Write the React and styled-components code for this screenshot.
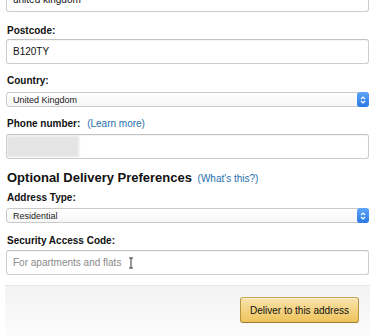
import React from "react";
import styled, { createGlobalStyle } from "styled-components";

const GlobalStyle = createGlobalStyle`
  html, body {
    margin: 0;
    padding: 0;
    background: #fff;
    font-family: "Liberation Sans", Arial, sans-serif;
    color: #111;
  }
`;

const Page = styled.div`
  width: 384px;
  height: 336px;
  overflow: hidden;
  padding: 0 15px 0 6px;
  box-sizing: border-box;
`;

const Form = styled.div`
  display: flex;
  flex-direction: column;
  margin-top: -13px;
`;

const Field = styled.div`
  display: flex;
  flex-direction: column;
  margin-top: ${(p) => p.$gap ?? 11}px;
`;

const Label = styled.div`
  font-size: 10px;
  line-height: 12px;
  font-weight: bold;
  padding-left: 1px;
  margin-bottom: ${(p) => p.$space ?? 3}px;
  white-space: nowrap;

  a {
    font-weight: normal;
    margin-left: 4px;
  }
`;

const Link = styled.a`
  color: #1f6fae;
  text-decoration: none;
  font-weight: normal;
`;

const TextBox = styled.div`
  height: 25px;
  box-sizing: border-box;
  border: 1px solid #cdcdcd;
  border-top-color: #c2c2c2;
  border-radius: 3px;
  box-shadow: inset 0 1px 0 rgba(0, 0, 0, 0.04);
  display: flex;
  align-items: center;
  padding: 0 6px;
  font-size: 10px;
  color: ${(p) => (p.$placeholder ? "#8a8a8a" : "#111")};
  overflow: hidden;
`;

const Redacted = styled.div`
  width: 72px;
  height: 21px;
  margin-left: -6px;
  background: #e4e4e4;
  filter: blur(1px);
`;

const Cursor = styled.svg`
  margin-left: 7px;
  flex: none;
`;

const Select = styled.div`
  height: 15px;
  box-sizing: border-box;
  border: 1px solid #c9c9c9;
  border-radius: 3px;
  background: linear-gradient(#ffffff, #f6f6f6);
  display: flex;
  align-items: center;
  justify-content: space-between;
  padding-left: 6px;
  font-size: 9px;
  color: #222;
`;

const Stepper = styled.div`
  width: 12px;
  height: 15px;
  margin-right: -1px;
  border-radius: 3px;
  background: linear-gradient(#5ea6f7, #2a78e4);
  display: flex;
  align-items: center;
  justify-content: center;
`;

const Heading = styled.div`
  font-size: 13px;
  line-height: 16px;
  font-weight: bold;
  padding-left: 1px;
  white-space: nowrap;

  a {
    font-size: 10px;
    margin-left: 2px;
  }
`;

const Footer = styled.div`
  margin: 10px -1px 0 -1px;
  border-top: 1px solid #e6e6e6;
  background: linear-gradient(#f3f3f3, #fbfbfb 60%, #fff);
  height: 60px;
  display: flex;
  justify-content: flex-end;
  align-items: flex-start;
  padding: 11px 11px 0 0;
`;

const Button = styled.button`
  width: 119px;
  height: 26px;
  border: 1px solid #a88734;
  border-color: #c9a44c #b8943e #9c7e31;
  border-radius: 3px;
  background: linear-gradient(#f8e3ad, #eec35a);
  box-shadow: inset 0 1px 0 rgba(255, 255, 255, 0.5);
  font-family: "Liberation Sans", Arial, sans-serif;
  font-size: 10px;
  color: #111;
  padding: 0;
  cursor: pointer;
`;

const Arrows = () => (
  <svg width="8" height="10" viewBox="0 0 8 10">
    <path d="M2 4 L4 2 L6 4" stroke="#fff" strokeWidth="1.2" fill="none" />
    <path d="M2 6 L4 8 L6 6" stroke="#fff" strokeWidth="1.2" fill="none" />
  </svg>
);

const DropDown = ({ value }) => (
  <Select>
    <span>{value}</span>
    <Stepper>
      <Arrows />
    </Stepper>
  </Select>
);

export default function App() {
  return (
    <Page>
      <GlobalStyle />
      <Form>
        <Field $gap={0}>
          <TextBox>united kingdom</TextBox>
        </Field>
        <Field $gap={13}>
          <Label $space={2}>Postcode:</Label>
          <TextBox>B120TY</TextBox>
        </Field>
        <Field>
          <Label $space={5}>Country:</Label>
          <DropDown value="United Kingdom" />
        </Field>
        <Field>
          <Label $space={4}>
            Phone number: <Link href="#">(Learn more)</Link>
          </Label>
          <TextBox>
            <Redacted />
          </TextBox>
        </Field>
        <Field>
          <Heading>
            Optional Delivery Preferences <Link href="#">(What's this?)</Link>
          </Heading>
        </Field>
        <Field $gap={5}>
          <Label $space={4}>Address Type:</Label>
          <DropDown value="Residential" />
        </Field>
        <Field $gap={12}>
          <Label $space={3}>Security Access Code:</Label>
          <TextBox $placeholder>
            For apartments and flats
            <Cursor width="6" height="12" viewBox="0 0 6 12">
              <path d="M1 1 H5 M3 1 V11 M1 11 H5" stroke="#333" strokeWidth="1" fill="none" />
            </Cursor>
          </TextBox>
        </Field>
      </Form>
      <Footer>
        <Button>Deliver to this address</Button>
      </Footer>
    </Page>
  );
}
